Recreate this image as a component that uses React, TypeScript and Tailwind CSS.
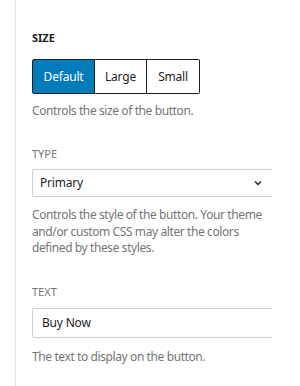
import React from "react";

export default function App() {
  const font = { fontFamily: '"Noto Sans", "Open Sans", sans-serif' };
  return (
    <div className="w-[300px] h-[386px] overflow-hidden bg-white" style={font}>
      <div className="ml-[15px] w-[257px] h-[386px] border-l border-[#e2e4e7] overflow-hidden pl-[16px] flex flex-col">
        <div className="-mt-[15px] h-[16px] leading-[16px] text-[12px] tracking-[-0.4px] text-[#757575] whitespace-nowrap pl-[2px]">
          Sets the button alignment for display.
        </div>
        <div className="mt-[29px] h-[16px] leading-[16px] text-[11px] font-bold uppercase text-[#1e1e1e]">
          Size
        </div>
        <div className="mt-[13px] flex h-[35px] w-[168px]">
          <button className="w-[63px] h-[35px] bg-[#007cba] text-white text-[12px] tracking-[-0.2px] border border-[#1e1e1e] rounded-l-[2px]">
            Default
          </button>
          <button className="w-[52px] h-[35px] bg-white text-[#1e1e1e] text-[12px] tracking-[-0.2px] border-y border-r border-[#1e1e1e]">
            Large
          </button>
          <button className="w-[53px] h-[35px] bg-white text-[#1e1e1e] text-[12px] tracking-[-0.2px] border-y border-r border-[#1e1e1e] rounded-r-[2px]">
            Small
          </button>
        </div>
        <div className="mt-[9px] h-[16px] leading-[16px] text-[12px] tracking-[-0.4px] text-[#757575]">
          Controls the size of the button.
        </div>
        <div className="mt-[27px] h-[16px] leading-[16px] text-[11px] uppercase text-[#757575]">
          Type
        </div>
        <div className="mt-[7px] w-[260px] h-[28px] border border-[#cfd0d2] rounded-[2px] flex items-center pl-[7px] text-[12px] tracking-[-0.2px] text-[#1e1e1e] shrink-0">
          <span className="flex-1">Primary</span>
          <svg width="8" height="6" viewBox="0 0 8 6" className="mr-[29px]">
            <polyline points="1,1.5 4,4.5 7,1.5" fill="none" stroke="#1e1e1e" strokeWidth="1.4" />
          </svg>
        </div>
        <div className="mt-[10px] w-[238px] leading-[16.5px] text-[12px] tracking-[-0.4px] text-[#757575]">
          Controls the style of the button. Your theme and/or custom CSS may alter the colors defined by these styles.
        </div>
        <div className="mt-[27px] h-[16px] leading-[16px] text-[11px] uppercase text-[#757575]">
          Text
        </div>
        <div className="mt-[8px] w-[260px] h-[30px] border border-[#cfd0d2] rounded-[2px] flex items-center pl-[9px] text-[12px] tracking-[-0.2px] text-[#1e1e1e] shrink-0">
          Buy Now
        </div>
        <div className="mt-[11px] h-[16px] leading-[16px] text-[12px] tracking-[-0.4px] text-[#757575]">
          The text to display on the button.
        </div>
      </div>
    </div>
  );
}
